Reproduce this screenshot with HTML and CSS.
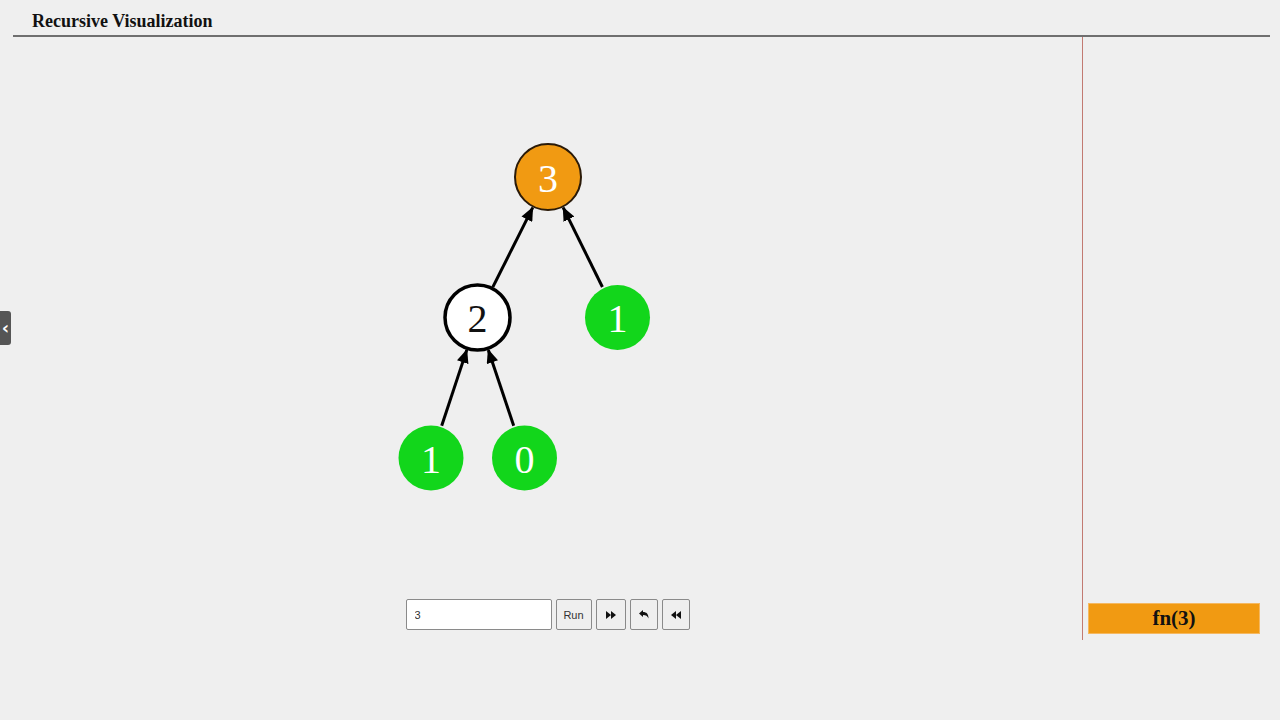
FILE: index.html
```html
<!DOCTYPE html>
<html>
<head>
<meta charset="utf-8">
<link rel="stylesheet" href="styles.css">
</head>
<body>
<div class="app">
  <header class="header"><h1 class="title">Recursive Visualization</h1></header>
  <div class="main">
    <section class="canvas-pane">
      <svg class="tree" viewBox="0 0 1069 560" width="1069" height="560">
        <defs>
          <marker id="arrow" markerUnits="userSpaceOnUse" markerWidth="14" markerHeight="12" refX="13" refY="6" orient="auto">
            <path d="M0,0 L14,6 L0,12 Z" fill="#000"/>
          </marker>
        </defs>
        <g class="edges">
          <line x1="479.8" y1="250.1" x2="519.7" y2="170.6" marker-end="url(#arrow)"/>
          <line x1="589.4" y1="250.0" x2="550.2" y2="170.6" marker-end="url(#arrow)"/>
          <line x1="428.7" y1="388.7" x2="453.8" y2="312.9" marker-end="url(#arrow)"/>
          <line x1="500.7" y1="388.8" x2="475.3" y2="312.9" marker-end="url(#arrow)"/>
        </g>
        <g class="node node-active"><circle cx="535" cy="140" r="33"/><text x="535" y="141">3</text></g>
        <g class="node node-pending"><circle cx="464.5" cy="280.5" r="32.5"/><text x="464.5" y="281.5">2</text></g>
        <g class="node node-done"><circle cx="604.5" cy="280.5" r="32.5"/><text x="604.5" y="281.5">1</text></g>
        <g class="node node-done"><circle cx="418" cy="421" r="32.5"/><text x="418" y="422">1</text></g>
        <g class="node node-done"><circle cx="511.5" cy="421" r="32.5"/><text x="511.5" y="422">0</text></g>
      </svg>
      <div class="controls">
        <input class="num-input" type="text" value="3">
        <button class="btn btn-run">Run</button>
        <button class="btn btn-icon btn-wide" title="Forward">
          <svg width="10" height="8" viewBox="0 0 10 8"><path d="M0,0 L5,4 L0,8 Z M5,0 L10,4 L5,8 Z" fill="#111"/></svg>
        </button>
        <button class="btn btn-icon" title="Undo">
          <svg width="10" height="9" viewBox="0 0 10 9"><path d="M0,3.5 L4,0 L4,2 C7.5,2 9.5,4 9.5,8.5 C8.5,6 7,5 4,5 L4,7 Z" fill="#111"/></svg>
        </button>
        <button class="btn btn-icon" title="Backward">
          <svg width="10" height="8" viewBox="0 0 10 8"><path d="M10,0 L5,4 L10,8 Z M5,0 L0,4 L5,8 Z" fill="#111"/></svg>
        </button>
      </div>
    </section>
    <aside class="stack-pane">
      <div class="frame">fn(3)</div>
    </aside>
  </div>
  <button class="side-tab">&#8249;</button>
</div>
</body>
</html>
```
FILE: styles.css
```css
html, body {
  margin: 0;
  padding: 0;
  background: #efefef;
  width: 1280px;
  height: 720px;
  overflow: hidden;
}
.app {
  position: relative;
  width: 1280px;
  height: 720px;
}
.header {
  margin: 0 10px 0 13px;
  height: 37px;
  border-bottom: 2px solid #6f6f6f;
  box-sizing: border-box;
}
.title {
  margin: 0;
  padding: 11px 0 0 19px;
  font-family: "Liberation Serif", "Times New Roman", serif;
  font-weight: bold;
  font-size: 18px;
  line-height: 20px;
  color: #111;
}
.main {
  display: flex;
  margin-left: 13px;
  margin-right: 10px;
  height: 603px;
}
.canvas-pane {
  width: 1069px;
  border-right: 1px solid #c27a72;
  display: flex;
  flex-direction: column;
  align-items: center;
  box-sizing: content-box;
}
.tree {
  display: block;
  flex: 0 0 auto;
}
.edges line {
  stroke: #000;
  stroke-width: 3;
}
.node text {
  font-family: "Liberation Serif", "Times New Roman", serif;
  font-size: 40px;
  text-anchor: middle;
  dominant-baseline: central;
}
.node-active circle {
  fill: #f19a12;
  stroke: #2a1a08;
  stroke-width: 2;
}
.node-active text { fill: #fff; }
.node-pending circle {
  fill: #fff;
  stroke: #000;
  stroke-width: 3.5;
}
.node-pending text { fill: #111; }
.node-done circle {
  fill: #12d61b;
}
.node-done text { fill: #fff; }
.controls {
  display: flex;
  gap: 4px;
  margin-top: 2px;
}
.num-input {
  width: 146px;
  height: 31px;
  box-sizing: border-box;
  border: 1px solid #8a8a8a;
  border-radius: 2px;
  background: #fff;
  padding: 0 8px;
  font-family: "Liberation Sans", Arial, sans-serif;
  font-size: 11px;
  color: #333;
}
.btn {
  height: 31px;
  box-sizing: border-box;
  border: 1px solid #8a8a8a;
  border-radius: 2px;
  background: #efefef;
  font-family: "Liberation Sans", Arial, sans-serif;
  font-size: 11px;
  color: #333;
  padding: 0;
  display: flex;
  align-items: center;
  justify-content: center;
}
.btn-run { width: 36px; }
.btn-icon { width: 28px; }
.btn-wide { width: 30px; }
.stack-pane {
  flex: 1;
  display: flex;
  flex-direction: column;
  justify-content: flex-end;
  padding: 0 10px 6px 5px;
}
.frame {
  height: 31px;
  background: #f19a12;
  border: 1px solid #f5b860;
  box-sizing: border-box;
  font-family: "Liberation Serif", "Times New Roman", serif;
  font-weight: bold;
  font-size: 21px;
  line-height: 29px;
  text-align: center;
  color: #111;
}
.side-tab {
  position: absolute;
  left: 0;
  top: 311px;
  width: 11px;
  height: 34px;
  padding: 0;
  border: none;
  border-radius: 0 3px 3px 0;
  background: #555;
  color: #fff;
  font-family: "DejaVu Sans", sans-serif;
  font-size: 18px;
  font-weight: bold;
  line-height: 34px;
  text-align: center;
}
```
